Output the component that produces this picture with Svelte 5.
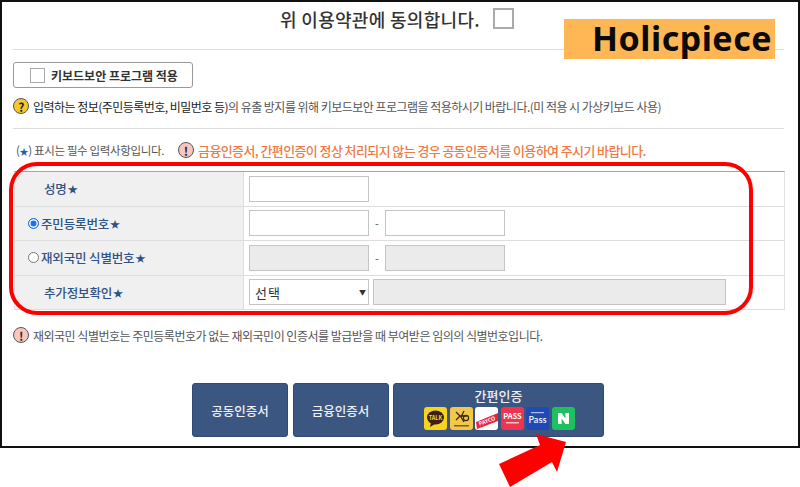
<script>
  const rows = [
    { label: '성명', radio: null },
    { label: '주민등록번호', radio: true },
    { label: '재외국민 식별번호', radio: false },
    { label: '추가정보확인', radio: null }
  ];
</script>

<div class="frame">
  <div class="agree">
    <span>위 이용약관에 동의합니다.</span>
    <i class="box big"></i>
  </div>
  <hr />

  <div class="keyboard"><i class="box"></i><b>키보드보안 프로그램 적용</b></div>

  <p class="info">
    <span class="mark yellow">?</span>
    <span><span class="dark">입력하는 정보(주민등록번호, 비밀번호 등)</span>의 유출 방지를 위해 키보드보안 프로그램을 적용하시기 바랍니다.(미 적용 시 가상키보드 사용)</span>
  </p>
  <hr class="second" />

  <div class="notes">
    <span class="req">(<em>★</em>) 표시는 필수 입력사항입니다.</span>
    <span class="mark pink">!</span>
    <span class="warn">금융인증서, 간편인증이 정상 처리되지 않는 경우 공동인증서를 이용하여 주시기 바랍니다.</span>
  </div>

  <div class="table">
    {#each rows as row, i}
      <div class="row">
        <div class="head" class:center={row.radio === null}>
          {#if row.radio !== null}
            <i class="radio" class:on={row.radio}></i>
          {/if}
          <span>{row.label}</span><em>★</em>
        </div>
        <div class="cell">
          {#if i === 0}
            <div class="input"></div>
          {:else if i === 3}
            <div class="input select"><span>선택</span><small>▼</small></div>
            <div class="input off wide"></div>
          {:else}
            <div class="input" class:off={i === 2}></div>
            <span class="dash">-</span>
            <div class="input" class:off={i === 2}></div>
          {/if}
        </div>
      </div>
    {/each}
  </div>

  <p class="foreign">
    <span class="mark pink">!</span>
    <span>재외국민 식별번호는 주민등록번호가 없는 재외국민이 인증서를 발급받을 때 부여받은 임의의 식별번호입니다.</span>
  </p>

  <div class="buttons">
    <div class="btn">공동인증서</div>
    <div class="btn">금융인증서</div>
    <div class="btn simple">
      <span>간편인증</span>
      <div class="apps">
        <svg viewBox="0 0 23 23"><rect width="23" height="23" rx="3" fill="#f7d51d" /><ellipse cx="11.500" cy="10.500" rx="8.500" ry="7" fill="#3c1e1e" /><path d="M7 15l-1 5 5-3z" fill="#3c1e1e" /><text x="11.500" y="12.500" font-size="5.500" font-weight="700" text-anchor="middle" fill="#f7d51d">TALK</text></svg>
        <svg viewBox="0 0 23 23"><rect width="23" height="23" rx="3" fill="#f2c84b" /><path d="M6 5l4 4-4 4M14 4l-3 6 3 5M10 9h7" stroke="#3a2a10" stroke-width="1.300" fill="none" /><circle cx="16" cy="11" r="2.600" fill="none" stroke="#3a2a10" stroke-width="1.200" /><rect x="4" y="18" width="15" height="1.500" fill="#7a5a20" /></svg>
        <svg viewBox="0 0 23 23"><rect width="23" height="23" rx="3" fill="#fff" /><path d="M1 15L23 6v8L2 22z" fill="#e8263b" /><text x="12" y="16" font-size="5.400" font-weight="700" text-anchor="middle" fill="#fff" transform="rotate(-20 12 14)">PAYCO</text></svg>
        <svg viewBox="0 0 23 23"><rect width="23" height="23" rx="3" fill="#f0334f" /><text x="11.500" y="12" font-size="7.500" font-weight="700" text-anchor="middle" fill="#fff">PASS</text><rect x="5" y="15" width="13" height="1.500" fill="#ffc0c8" /></svg>
        <svg viewBox="0 0 23 23"><rect width="23" height="23" rx="3" fill="#1f49b4" /><rect x="5" y="5" width="13" height="1.200" fill="#a9bdf0" /><text x="11.500" y="15.500" font-size="8.500" font-weight="500" text-anchor="middle" fill="#fff">Pass</text></svg>
        <svg viewBox="0 0 23 23"><rect width="23" height="23" rx="3" fill="#1fc15e" /><path d="M6 6h3.600l3.800 5.600V6H17v11h-3.600L9.600 11.400V17H6z" fill="#fff" /></svg>
      </div>
    </div>
  </div>

  <div class="circle"></div>
  <div class="brand">Holicpiece</div>
</div>

<svg class="arrow" viewBox="0 0 800 487">
  <path d="M536 434L566 442L557 472L552 462L510 487L499 464L540 445Z" fill="#ff0000" />
</svg>

<style>
  :global(body) {
    margin: 0;
    background: #fff;
    font-family: "Noto Sans CJK KR", "Noto Sans", sans-serif;
  }

  .frame {
    position: relative;
    box-sizing: border-box;
    width: 800px;
    height: 448px;
    border: 2px solid #111;
    padding: 0 14px 0 11px;
    overflow: hidden;
  }

  .agree {
    height: 47px;
    display: flex;
    justify-content: center;
    align-items: center;
    gap: 13px;
    padding: 0 3px 14px 0;
    box-sizing: border-box;
    font-size: 18px;
    font-weight: 500;
    letter-spacing: 0.3px;
    color: #333;
  }

  hr {
    border: 0;
    border-top: 1px solid #ddd;
    margin: 0;
  }

  .box {
    display: block;
    box-sizing: border-box;
    width: 15px;
    height: 15px;
    border: 1px solid #aaa;
    background: #fff;
  }

  .box.big {
    width: 21px;
    height: 21px;
    border-width: 2px;
  }

  .keyboard {
    box-sizing: border-box;
    width: 180px;
    height: 26px;
    margin-top: 12px;
    display: flex;
    align-items: center;
    gap: 6px;
    padding-left: 16px;
    border: 1px solid #999;
    border-radius: 3px;
    font-size: 12px;
    color: #333;
  }

  .info,
  .foreign {
    margin: 0;
    display: flex;
    align-items: center;
    gap: 4px;
    font-size: 12px;
    color: #555;
    letter-spacing: -0.5px;
    white-space: nowrap;
  }

  .info {
    margin-top: 6px;
    height: 24px;
    letter-spacing: -0.53px;
  }

  .dark {
    color: #222;
  }

  hr.second {
    margin-top: 10px;
  }

  .mark {
    flex: none;
    box-sizing: border-box;
    width: 16px;
    height: 16px;
    border-radius: 50%;
    border: 1px solid #555;
    display: flex;
    align-items: center;
    justify-content: center;
    font-size: 12px;
    font-weight: 700;
    color: #222;
  }

  .yellow {
    background: #f5c92e;
  }

  .pink {
    background: #f8c6c0;
  }

  .notes {
    height: 42px;
    display: flex;
    align-items: center;
    padding-left: 3px;
    white-space: nowrap;
  }

  .req {
    font-size: 11.500px;
    color: #555;
    letter-spacing: -0.35px;
    margin-right: 14px;
  }

  .req em {
    color: #2a5a9c;
    font-style: normal;
    font-size: 9px;
  }

  .warn {
    margin-left: 4px;
    font-size: 13px;
    font-weight: 500;
    color: #ef7a45;
    letter-spacing: -0.6px;
  }

  .table {
    width: 769px;
    margin-left: 1px;
    border-top: 1px solid #8ba8d0;
    border-left: 1px solid #e2e2e2;
    border-right: 1px solid #e2e2e2;
  }

  .row {
    height: 33.500px;
    display: flex;
    border-bottom: 1px solid #ddd;
  }

  .head {
    box-sizing: border-box;
    width: 229px;
    background: #f0f0f0;
    border-right: 1px solid #ddd;
    display: flex;
    align-items: center;
    gap: 1px;
    padding-left: 13px;
    font-size: 12.500px;
    font-weight: 500;
    letter-spacing: -0.15px;
    color: #2e5283;
  }

  .head.center {
    padding-left: 29px;
  }

  .head em {
    font-style: normal;
    font-size: 10px;
  }

  .radio {
    box-sizing: border-box;
    width: 11px;
    height: 11px;
    margin-right: 1px;
    border-radius: 50%;
    border: 1px solid #777;
    background: #fff;
  }

  .radio.on {
    border-color: #1a73e8;
    box-shadow: inset 0 0 0 1.500px #fff;
    background: #1a73e8;
  }

  .cell {
    display: flex;
    align-items: center;
    padding-left: 5px;
    flex: 1;
  }

  .input {
    box-sizing: border-box;
    width: 120px;
    height: 26px;
    border: 1px solid #c4c4c4;
    background: #fff;
  }

  .input.off {
    background: #ebebeb;
  }

  .input.wide {
    width: 353px;
    margin-left: 4px;
  }

  .select {
    display: flex;
    align-items: center;
    justify-content: space-between;
    padding: 0 1px 0 5px;
    font-size: 13px;
    color: #333;
    letter-spacing: 1px;
  }

  .select small {
    font-size: 7px;
  }

  .dash {
    width: 16px;
    text-align: center;
    font-size: 11px;
    color: #555;
  }

  .foreign {
    margin-top: 16px;
    height: 18px;
  }

  .buttons {
    margin-top: 39px;
    margin-left: 179px;
    display: flex;
    gap: 4.500px;
  }

  .btn {
    box-sizing: border-box;
    width: 96px;
    height: 54px;
    background: #3b5681;
    border: 1px solid #2f4a75;
    border-radius: 3px;
    color: #f0f0f0;
    font-size: 12.500px;
    font-weight: 500;
    display: flex;
    align-items: center;
    justify-content: center;
  }

  .btn.simple {
    width: 211px;
    flex-direction: column;
    justify-content: flex-start;
    gap: 2px;
    padding-top: 2px;
    font-size: 13px;
    line-height: 19px;
  }

  .apps {
    display: flex;
    gap: 2.500px;
    margin-left: 1.500px;
  }

  .apps svg {
    width: 23px;
    height: 23px;
  }

  .circle {
    position: absolute;
    left: 7px;
    top: 160px;
    width: 744px;
    height: 153px;
    box-sizing: border-box;
    border: 4px solid #ff0000;
    border-radius: 28px;
    pointer-events: none;
  }

  .brand {
    position: absolute;
    left: 562px;
    top: 17px;
    width: 211px;
    height: 40px;
    box-sizing: border-box;
    background: #ffb755;
    padding-right: 3px;
    text-align: right;
    font-family: "Noto Sans", sans-serif;
    font-size: 34px;
    font-weight: 700;
    letter-spacing: 0.5px;
    line-height: 38px;
    color: #0a0a0a;
  }

  .arrow {
    position: absolute;
    left: 0;
    top: 0;
    width: 800px;
    height: 487px;
    pointer-events: none;
  }
</style>
